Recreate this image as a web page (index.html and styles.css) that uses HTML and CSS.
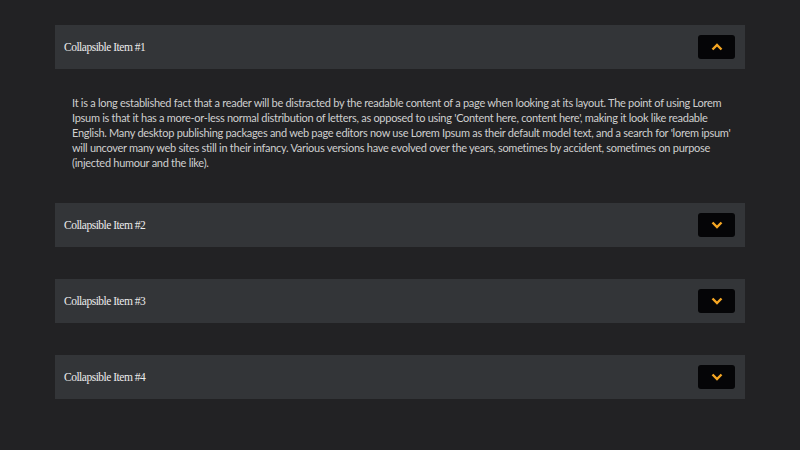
FILE: index.html
```html
<!DOCTYPE html>
<html lang="en">
<head>
    <meta charset="UTF-8">
    <meta name="viewport" content="width=device-width, initial-scale=1.0">
    <title>Collapsible</title>
    <link rel="stylesheet" href="styles.css">
</head>
<body>
    <div class="accordion">
        <div class="item open">
            <div class="item-header">
                <span class="item-title">Collapsible Item #1</span>
                <button class="toggle">
                    <svg width="12" height="8" viewBox="0 0 12 8"><path d="M1.5 6.5 L6 2 L10.5 6.5" fill="none" stroke="currentColor" stroke-width="2.4"/></svg>
                </button>
            </div>
            <div class="item-body">
                <p>It is a long established fact that a reader will be distracted by the readable content of a page when looking at its layout. The point of using Lorem<br>
                Ipsum is that it has a more-or-less normal distribution of letters, as opposed to using 'Content here, content here', making it look like readable<br>
                English. Many desktop publishing packages and web page editors now use Lorem Ipsum as their default model text, and a search for 'lorem ipsum'<br>
                will uncover many web sites still in their infancy. Various versions have evolved over the years, sometimes by accident, sometimes on purpose<br>
                (injected humour and the like).</p>
            </div>
        </div>
        <div class="item">
            <div class="item-header">
                <span class="item-title">Collapsible Item #2</span>
                <button class="toggle">
                    <svg width="12" height="8" viewBox="0 0 12 8"><path d="M1.5 1.5 L6 6 L10.5 1.5" fill="none" stroke="currentColor" stroke-width="2.4"/></svg>
                </button>
            </div>
        </div>
        <div class="item">
            <div class="item-header">
                <span class="item-title">Collapsible Item #3</span>
                <button class="toggle">
                    <svg width="12" height="8" viewBox="0 0 12 8"><path d="M1.5 1.5 L6 6 L10.5 1.5" fill="none" stroke="currentColor" stroke-width="2.4"/></svg>
                </button>
            </div>
        </div>
        <div class="item">
            <div class="item-header">
                <span class="item-title">Collapsible Item #4</span>
                <button class="toggle">
                    <svg width="12" height="8" viewBox="0 0 12 8"><path d="M1.5 1.5 L6 6 L10.5 1.5" fill="none" stroke="currentColor" stroke-width="2.4"/></svg>
                </button>
            </div>
        </div>
    </div>
</body>
</html>
```

FILE: styles.css
```css
body {
    margin: 0;
    padding: 25px 55px;
    background-color: #222224;
    color: #cfcfcf;
}
.accordion {
    display: flex;
    flex-direction: column;
    gap: 32px;
}
.item-header {
    display: flex;
    justify-content: space-between;
    align-items: center;
    height: 44px;
    padding: 0 10px 0 9px;
    background-color: #333538;
    box-sizing: border-box;
}
.item-title {
    font-family: "Liberation Serif", serif;
    font-size: 11.5px;
    letter-spacing: -0.5px;
    color: #ececec;
}
.toggle {
    display: flex;
    align-items: center;
    justify-content: center;
    width: 37px;
    height: 24px;
    padding: 0;
    border: none;
    border-radius: 3px;
    background-color: #050507;
    color: #f5a623;
    cursor: pointer;
}
.item-body {
    padding: 26px 0 1px 17px;
}
.item-body p {
    margin: 0;
    font-family: Lato, sans-serif;
    font-size: 11px;
    letter-spacing: -0.28px;
    line-height: 15px;
}
```
